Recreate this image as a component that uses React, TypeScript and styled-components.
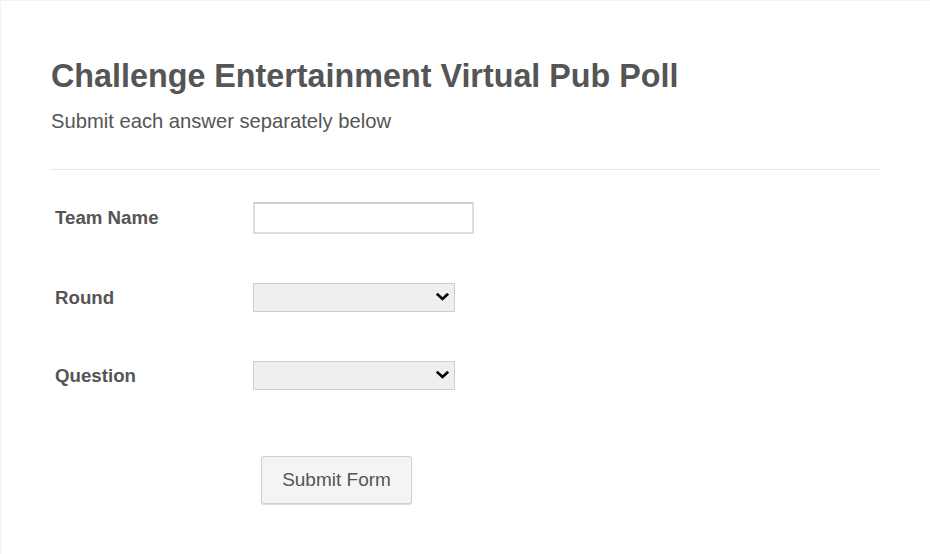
import * as React from "react";
import styled, { createGlobalStyle } from "styled-components";

const GlobalStyle = createGlobalStyle`
  html, body {
    margin: 0;
    padding: 0;
    background: #fff;
  }
  body {
    font-family: "Liberation Sans", Arial, sans-serif;
    color: #555;
  }
`;

const Page = styled.div`
  box-sizing: border-box;
  width: 930px;
  height: 554px;
  border-top: 1px solid #f3f3f3;
  border-left: 1px solid #f3f3f3;
  padding: 57px 50px 0 50px;
`;

const Header = styled.div`
  border-bottom: 1px solid #e6e6e6;
  padding-bottom: 35px;
`;

const Title = styled.h1`
  margin: 0;
  font-size: 32.3px;
  line-height: 36px;
  font-weight: 700;
  color: #555;
`;

const Subtitle = styled.div`
  margin-top: 14px;
  font-size: 20.2px;
  line-height: 26px;
  color: #555;
`;

const Form = styled.div`
  display: flex;
  flex-direction: column;
  padding: 0 4px;
`;

const Row = styled.div<{ $top: number }>`
  display: flex;
  align-items: center;
  margin-top: ${(p) => p.$top}px;
`;

const Label = styled.label`
  width: 198px;
  font-size: 18.7px;
  font-weight: 700;
  color: #555;
`;

const TextInput = styled.input`
  box-sizing: border-box;
  width: 221px;
  height: 32px;
  border: 2px solid #dcdcdc;
  border-top-color: #d0d0d0;
  background: #fff;
  padding: 2px 6px;
  font-family: inherit;
  font-size: 16px;
  outline: 0;
`;

const SelectWrap = styled.div`
  position: relative;
  width: 202px;
  height: 29px;
`;

const Select = styled.select`
  box-sizing: border-box;
  appearance: none;
  -webkit-appearance: none;
  width: 100%;
  height: 100%;
  border: 1px solid #cfcfcf;
  border-radius: 0;
  background: #efefef;
  font-family: inherit;
  font-size: 15px;
  color: #000;
  padding: 0 28px 0 6px;
`;

const Chevron = styled.svg`
  position: absolute;
  right: 6px;
  top: 10px;
  width: 13px;
  height: 8px;
  pointer-events: none;
`;

const ButtonRow = styled.div`
  display: flex;
  padding-left: 210px;
  margin-top: 66px;
`;

const SubmitButton = styled.button`
  box-sizing: border-box;
  width: 151px;
  height: 48px;
  border: 1px solid #cfcfcf;
  border-radius: 3px;
  background: #f4f4f4;
  box-shadow: 0 1px 1px rgba(0, 0, 0, 0.15);
  font-family: inherit;
  font-size: 19px;
  color: #555;
  cursor: pointer;
`;

const Dropdown = () => (
  <SelectWrap>
    <Select defaultValue="">
      <option value=""></option>
    </Select>
    <Chevron viewBox="0 0 13 8">
      <path
        d="M1.8 1.6 L6.5 6 L11.2 1.6"
        fill="none"
        stroke="#000"
        strokeWidth="2.6"
        strokeLinecap="square"
      />
    </Chevron>
  </SelectWrap>
);

const App = () => {
  const [team, setTeam] = React.useState("");

  return (
    <>
      <GlobalStyle />
      <Page>
        <Header>
          <Title>Challenge Entertainment Virtual Pub Poll</Title>
          <Subtitle>Submit each answer separately below</Subtitle>
        </Header>
        <Form>
          <Row $top={32}>
            <Label>Team Name</Label>
            <TextInput
              type="text"
              value={team}
              onChange={(e) => setTeam(e.target.value)}
            />
          </Row>
          <Row $top={49}>
            <Label>Round</Label>
            <Dropdown />
          </Row>
          <Row $top={49}>
            <Label>Question</Label>
            <Dropdown />
          </Row>
        </Form>
        <ButtonRow>
          <SubmitButton>Submit Form</SubmitButton>
        </ButtonRow>
      </Page>
    </>
  );
};

export default App;
